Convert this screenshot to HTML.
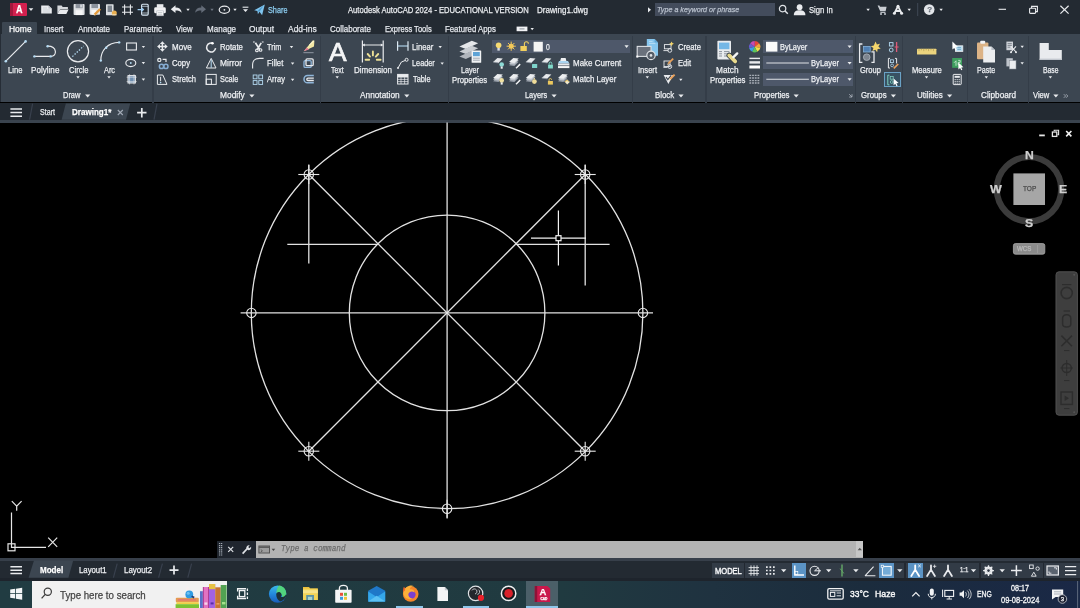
<!DOCTYPE html>
<html lang="en">
<head>
<meta charset="utf-8">
<title>Autodesk AutoCAD 2024 - EDUCATIONAL VERSION Drawing1.dwg</title>
<style>
*{box-sizing:border-box;margin:0;padding:0}
html,body{width:1080px;height:608px;overflow:hidden;background:#000}
body{font-family:"Liberation Sans",sans-serif;color:#e6e9ee;font-size:9.6px;line-height:10px;position:relative}
#app{position:absolute;left:0;top:0;width:1080px;height:608px;overflow:hidden;will-change:transform}
.abs,.t,.b{position:absolute}
.t{white-space:nowrap;line-height:10px;height:10px;color:#eff1f4;transform-origin:0 50%;-webkit-text-stroke:.25px currentColor}
.bar{position:absolute;left:0;width:1080px}
#title{top:0;height:20px;background:#232a32}
#tabs{top:20px;height:16px;background:#232a32}
#ribbon{top:34.3px;height:68.2px;background:#3c4651}
#ftabs{top:102.5px;height:17.5px;background:#232a32}
#fstripe{top:119.8px;height:2.8px;background:#3a434e}
#canvas{top:122.6px;height:435.2px;background:#000}
#lstripe{top:557.8px;height:2.8px;background:#373f4a}
#ltabs{top:560.6px;height:17.2px;background:#232a32}
#lband{top:577.8px;height:2.8px;background:#1e242c}
#taskbar{top:580.6px;height:27.4px;background:linear-gradient(90deg,#213c42 0%,#203a40 52%,#1f3240 66%,#1b2c3d 80%,#1a2846 100%)}
svg{position:absolute;overflow:visible}
</style>
</head>
<body>
<div id="app">
<div class="bar" id="title"></div>
<div class="bar" id="tabs"></div>
<div class="bar" id="ribbon"></div>
<div class="bar" id="ftabs"></div>
<div class="bar" id="fstripe"></div>
<div class="bar" id="canvas"></div>
<div class="bar" id="lstripe"></div>
<div class="bar" id="ltabs"></div>
<div class="bar" id="lband"></div>
<div class="bar" id="taskbar"></div>

<!-- DRAWING -->
<svg id="dwg" style="left:0;top:122px" width="1080" height="437" viewBox="0 122 1080 437">
<clipPath id="cv"><rect x="0" y="122.6" width="1080" height="435.2"/></clipPath>
<g fill="none" stroke="#e2e2e2" stroke-width="1.3" clip-path="url(#cv)">
<circle cx="447.1" cy="312.9" r="195.8"/>
<circle cx="447.1" cy="312.9" r="97.8"/>
<line x1="240.6" y1="312.9" x2="653" y2="312.9"/>
<line x1="447.1" y1="118" x2="447.1" y2="518.6"/>
<line x1="308.8" y1="174.5" x2="585.2" y2="451.2"/>
<line x1="585.2" y1="174.5" x2="308.8" y2="451.2"/>
<line x1="308.8" y1="164.5" x2="308.8" y2="263.5"/>
<line x1="287.3" y1="244.4" x2="378" y2="244.4"/>
<line x1="585.2" y1="164.5" x2="585.2" y2="285.5"/>
<line x1="516.2" y1="244.4" x2="609.6" y2="244.4"/>
</g>
<g fill="none" stroke="#e8e8e8" stroke-width="1.1">
<circle cx="308.8" cy="174.5" r="4.7"/><line x1="298.3" y1="174.5" x2="319.3" y2="174.5"/><line x1="308.8" y1="165" x2="308.8" y2="184"/><circle cx="585.2" cy="174.5" r="4.7"/><line x1="574.7" y1="174.5" x2="595.7" y2="174.5"/><line x1="585.2" y1="165" x2="585.2" y2="184"/><circle cx="308.8" cy="451.2" r="4.7"/><line x1="298.3" y1="451.2" x2="319.3" y2="451.2"/><line x1="308.8" y1="441.7" x2="308.8" y2="460.7"/><circle cx="585.2" cy="451.2" r="4.7"/><line x1="574.7" y1="451.2" x2="595.7" y2="451.2"/><line x1="585.2" y1="441.7" x2="585.2" y2="460.7"/><circle cx="251.4" cy="312.9" r="4.7"/><circle cx="642.9" cy="312.9" r="4.7"/><circle cx="447.1" cy="508.7" r="4.7"/><line x1="447.1" y1="499.7" x2="447.1" y2="517.7"/>
</g>
<g fill="none" stroke="#f2f2f2" stroke-width="1.2">
<line x1="531" y1="238.2" x2="586" y2="238.2"/><line x1="558.4" y1="210.5" x2="558.4" y2="265.5"/>
<rect x="556" y="235.7" width="5" height="5" fill="#000"/>
</g>
<g fill="none" stroke="#e6e6e6" stroke-width="1.2">
<path d="M11.5 512.5V547.3H46"/><rect x="8" y="543.8" width="7" height="7"/>
<path d="M11.8 501.2L16.7 506.2L21.6 501.2M16.7 506.2V510.8"/>
<path d="M48.2 537.6L57.2 546.8M57.2 537.6L48.2 546.8"/>
</g>
</svg>
<div class="b" style="left:10px;top:2.5px;width:16.5px;height:13.5px;background:#d3204e;border-radius:1px"></div>
<div class="b" style="left:10px;top:2.5px;width:2.6px;height:13.5px;background:#a3183d;border-radius:1px 0 0 1px"></div>
<span class="t" style="left:15.8px;top:3.9px;font-size:10.5px;transform:scaleX(0.869);color:#fff;font-weight:bold;">A</span>
<svg style="left:0px;top:0px" width="330" height="20" viewBox="0 0 330 20" ><path d="M28.7 8.2h4.6l-2.3 2.8z" fill="#e9ebee"/><path d="M41.2 5.4h7.3l3.3 3.2v5H41.2z" fill="#e9ebee"/><path d="M48.5 5.4v3.2h3.3" fill="#b9bec6"/><path d="M43 8h4M43 10h7M43 12h7" stroke="#c3c7cd" stroke-width=".7"/><path d="M57.4 5.6h4.2l1.1 1.5h5.2v2h-7.6l-2.9 4.6z" fill="#d5d8dc"/><path d="M59.9 9.4h8.7l-2.3 4.6h-8.9z" fill="#e9ebee"/><rect x="73.6" y="3.9" width="11" height="11.2" rx=".8" fill="#dfe1e4"/><rect x="75.6" y="3.9" width="7" height="4.3" fill="#8b929c"/><rect x="75.6" y="10.2" width="7" height="4.9" fill="#f6f6f6"/><rect x="80.3" y="4.5" width="1.5" height="3" fill="#dfe1e4"/><rect x="89.6" y="3.9" width="10.4" height="10.8" rx=".8" fill="#dfe1e4"/><rect x="91.4" y="3.9" width="6.6" height="4.2" fill="#8b929c"/><rect x="91.4" y="10" width="5" height="4.7" fill="#f6f6f6"/><path d="M94.6 14.6l5.6-5.6" stroke="#e49b3c" stroke-width="2.3"/><path d="M93.8 15.6l1.6-.4-1.1-1.1z" fill="#f3d9a8"/><rect x="106" y="4.2" width="7.6" height="11" rx=".6" fill="#dcdfe2"/><rect x="107.6" y="5.6" width="4.4" height="6.4" fill="#7d858f"/><circle cx="114.3" cy="12.9" r="2.5" fill="#e9b052"/><path d="M112.3 14.8h4.3" stroke="#f2e3c0" stroke-width="1.1"/><path d="M124.6 4.4v10.4M130.4 4.4v10.4M122 7h11M122 12.3h11" stroke="#e9ebee" stroke-width="1.1" fill="none"/><rect x="141.6" y="4.3" width="6.6" height="10.8" rx="1" fill="none" stroke="#d9e8f4" stroke-width="1.1"/><path d="M141.6 6.3h6.6M141.6 13h6.6" stroke="#d9e8f4" stroke-width=".7"/><path d="M137.6 9.6h5.6M141.3 7.6l2.2 2-2.2 2" stroke="#9ecbee" stroke-width="1.1" fill="none"/><rect x="156.8" y="4.2" width="6.6" height="3.6" fill="#e9ebee"/><rect x="154.2" y="7.3" width="11.6" height="6" rx="1.4" fill="#f1f2f4"/><rect x="156.8" y="10.9" width="6.6" height="4.9" fill="#fff" stroke="#aab0b8" stroke-width=".6"/><path d="M157.8 12.6h4.6M157.8 14.2h4.6" stroke="#9aa1aa" stroke-width=".6"/><path d="M170.8 9.2l4.7-3.9v2.3c3.7 0 5.9 1.9 6.2 5.2c-1.5-1.8-3.3-2.4-6.2-2.4v2.7z" fill="#e9ebee"/><path d="M186.3 8.7h3.4l-1.7 2.2z" fill="#e9ebee"/><path d="M206 9.2l-4.7-3.9v2.3c-3.7 0-5.9 1.9-6.2 5.2c1.5-1.8 3.3-2.4 6.2-2.4v2.7z" fill="#636b77"/><path d="M210.3 8.7h3.4l-1.7 2.2z" fill="#6e7682"/><ellipse cx="224.4" cy="9.8" rx="5.2" ry="3.6" fill="none" stroke="#e9ebee" stroke-width="1.2"/><circle cx="224.4" cy="9.8" r=".9" fill="#e9ebee"/><path d="M233.3 8.7h3.4l-1.7 2.2z" fill="#e9ebee"/><path d="M242.6 7.2h5.8" stroke="#e9ebee" stroke-width="1.1"/><path d="M243 9.2h5l-2.5 2.8z" fill="#e9ebee"/><path d="M254.2 10.2l10.6-5.6-2.7 10.6-2.6-3.4-1.6 2.4-.5-3.2z" fill="#7fc4ee"/><path d="M257.4 11l6.2-5.4-4.1 6.2" fill="#4d98c8"/></svg>
<span class="t" style="left:268px;top:4.7px;transform:scaleX(0.761);color:#8fd0f4;">Share</span>
<span class="t" style="left:348px;top:4.7px;transform:scaleX(0.794);color:#eef0f3;">Autodesk AutoCAD 2024 - EDUCATIONAL VERSION</span>
<span class="t" style="left:537.3px;top:4.7px;transform:scaleX(0.839);color:#eef0f3;">Drawing1.dwg</span>
<div class="b" style="left:654.7px;top:3px;width:120.3px;height:13px;background:#434c5c;"></div>
<span class="t" style="left:656.5px;top:4.6px;font-size:8px;transform:scaleX(0.895);color:#b9c1cd;font-style:italic;">Type a keyword or phrase</span>
<span class="t" style="left:808.7px;top:4.7px;transform:scaleX(0.797);color:#eef0f3;">Sign In</span>
<svg style="left:640px;top:0px" width="440" height="20" viewBox="640 0 440 20" ><path d="M648 7.2l3 2.6-3 2.6z" fill="#e9ebee"/><circle cx="782.6" cy="8.6" r="3.2" fill="none" stroke="#dfe2e6" stroke-width="1.2"/><path d="M785 11l2.8 2.8" stroke="#dfe2e6" stroke-width="1.5"/><circle cx="799.6" cy="7.2" r="2.9" fill="#e9ebee"/><path d="M793.8 15.2c0-3.7 2.4-4.9 5.8-4.9s5.8 1.2 5.8 4.9z" fill="#e9ebee"/><path d="M866.4 8.7h3.4l-1.7 2.2z" fill="#e9ebee"/><path d="M877.6 5.4h1.8l.6 1.4h6.6l-1 4.4h-5.4z" fill="#c9cdd3"/><path d="M880.4 12.4h5" stroke="#c9cdd3" stroke-width="1"/><circle cx="881" cy="14" r="1" fill="#c9cdd3"/><circle cx="885" cy="14" r="1" fill="#c9cdd3"/><path d="M894.6 13l3.4-6.8 3.4 6.8M895.8 11h4.4" stroke="#e9ebee" stroke-width="1.8" fill="none" stroke-linejoin="round"/><circle cx="898" cy="6.2" r="1.5" fill="#e9ebee"/><circle cx="894.4" cy="13.2" r="1.5" fill="#e9ebee"/><circle cx="901.6" cy="13.2" r="1.5" fill="#e9ebee"/><path d="M907.5 8.7h3.4l-1.7 2.2z" fill="#e9ebee"/><path d="M917.7 3v13" stroke="#3f4856" stroke-width="1"/><circle cx="929.2" cy="9.6" r="5.3" fill="#e2e5e9"/><path d="M939.4 8.7h3.4l-1.7 2.2z" fill="#e9ebee"/><path d="M998.6 9.3h7.4" stroke="#e9ebee" stroke-width="1.1"/><path d="M1031.6 8.2v-1.8h5.8v5.2h-1.8" stroke="#e9ebee" stroke-width="1.1" fill="none"/><rect x="1029.6" y="8.2" width="6" height="5.2" rx=".8" stroke="#e9ebee" stroke-width="1.1" fill="none"/><path d="M1060.4 5.8l8.2 7.8M1068.6 5.8l-8.2 7.8" stroke="#e9ebee" stroke-width="1.2"/></svg>
<span class="t" style="left:927.2px;top:4.6px;font-size:8px;color:#6a717b;font-weight:bold;">?</span>
<div class="b" style="left:2.2px;top:21.6px;width:35.2px;height:13.4px;background:#3c4651;border-radius:1px 1px 0 0"></div>
<span class="t" style="left:8.6px;top:23.6px;transform:scaleX(0.883);color:#fff;">Home</span>
<span class="t" style="left:44.4px;top:23.6px;transform:scaleX(0.812);color:#e6e9ee;">Insert</span>
<span class="t" style="left:78px;top:23.6px;transform:scaleX(0.833);color:#e6e9ee;">Annotate</span>
<span class="t" style="left:124px;top:23.6px;transform:scaleX(0.819);color:#e6e9ee;">Parametric</span>
<span class="t" style="left:176.3px;top:23.6px;transform:scaleX(0.81);color:#e6e9ee;">View</span>
<span class="t" style="left:206.7px;top:23.6px;transform:scaleX(0.839);color:#e6e9ee;">Manage</span>
<span class="t" style="left:249.2px;top:23.6px;transform:scaleX(0.868);color:#e6e9ee;">Output</span>
<span class="t" style="left:288px;top:23.6px;transform:scaleX(0.882);color:#e6e9ee;">Add-ins</span>
<span class="t" style="left:330.4px;top:23.6px;transform:scaleX(0.833);color:#e6e9ee;">Collaborate</span>
<span class="t" style="left:384.8px;top:23.6px;transform:scaleX(0.784);color:#e6e9ee;">Express Tools</span>
<span class="t" style="left:445px;top:23.6px;transform:scaleX(0.814);color:#e6e9ee;">Featured Apps</span>
<svg style="left:510px;top:22px" width="30" height="14" viewBox="510 22 30 14" ><rect x="516.6" y="26.6" width="10.8" height="4.6" fill="#f2f3f5"/><path d="M519.5 28.9h5" stroke="#6e7682" stroke-width=".8"/><path d="M530.5 28.1h3.4l-1.7 2.2z" fill="#e9ebee"/></svg>
<div class="b" style="left:152.3px;top:35.5px;width:1.4px;height:67px;background:#343d48;"></div>
<div class="b" style="left:319.7px;top:35.5px;width:1.4px;height:67px;background:#343d48;"></div>
<div class="b" style="left:447.5px;top:35.5px;width:1.4px;height:67px;background:#343d48;"></div>
<div class="b" style="left:631.6999999999999px;top:35.5px;width:1.4px;height:67px;background:#343d48;"></div>
<div class="b" style="left:705.3px;top:35.5px;width:1.4px;height:67px;background:#343d48;"></div>
<div class="b" style="left:855.0999999999999px;top:35.5px;width:1.4px;height:67px;background:#343d48;"></div>
<div class="b" style="left:901.9px;top:35.5px;width:1.4px;height:67px;background:#343d48;"></div>
<div class="b" style="left:966.8px;top:35.5px;width:1.4px;height:67px;background:#343d48;"></div>
<div class="b" style="left:1027.8999999999999px;top:35.5px;width:1.4px;height:67px;background:#343d48;"></div>
<div class="b" style="left:0px;top:34.3px;width:1.4px;height:68.2px;background:#262d36;"></div>
<svg style="left:0px;top:36px" width="500" height="67" viewBox="0 36 500 67" ><path d="M5.8 61.2L25.6 41.4" stroke="#e9ebee" stroke-width="1.2"/><circle cx="5.8" cy="61.2" r="1.3" fill="#b4daf2"/><circle cx="25.6" cy="41.4" r="1.3" fill="#b4daf2"/><path d="M34.4 56.4h16.4c6.6 0 6.6-10.2-3-10.2" stroke="#e9ebee" stroke-width="1.2" fill="none"/><circle cx="34.4" cy="56.4" r="1.2" fill="#b4daf2"/><circle cx="50.6" cy="56.4" r="1.2" fill="#b4daf2"/><circle cx="47.6" cy="46.2" r="1.2" fill="#b4daf2"/><circle cx="78" cy="51.3" r="10.6" stroke="#e9ebee" stroke-width="1.2" fill="none"/><path d="M72.4 56.6L83.6 46" stroke="#b4daf2" stroke-width="1.3" stroke-dasharray="1.4 1.6"/><path d="M100.8 60.6c0-10.6 7-18 18.4-18.2" stroke="#e9ebee" stroke-width="1.2" fill="none"/><circle cx="100.8" cy="60.6" r="1.2" fill="#b4daf2"/><circle cx="119.2" cy="42.4" r="1.2" fill="#b4daf2"/><circle cx="106.2" cy="47.8" r="1.2" fill="#b4daf2"/><path d="M76.3 76.2h3.4l-1.7 2.2z" fill="#e9ebee"/><path d="M107.3 76.2h3.4l-1.7 2.2z" fill="#e9ebee"/><rect x="126.6" y="43" width="9.8" height="7" stroke="#e9ebee" stroke-width="1.1" fill="none"/><ellipse cx="130.8" cy="63" rx="5" ry="3.6" stroke="#e9ebee" stroke-width="1.1" fill="none"/><circle cx="130.8" cy="63" r=".9" fill="#b4daf2"/><rect x="128" y="75.6" width="7.4" height="7.4" fill="#6f8fb0" stroke="#e9ebee" stroke-width="1"/><path d="M126.6 77.2h10.2M126.6 81.6h10.2M129.6 74.2v10.2M134 74.2v10.2" stroke="#e9ebee" stroke-width=".6"/><path d="M141.7 45.9h3.4l-1.7 2.2z" fill="#e9ebee"/><path d="M141.7 62.1h3.4l-1.7 2.2z" fill="#e9ebee"/><path d="M141.7 78.5h3.4l-1.7 2.2z" fill="#e9ebee"/><path d="M85.1 94.4h5.2l-2.6 3z" fill="#e9ebee"/><path d="M162.4 43.4v6.2M159.3 46.5h6.2" stroke="#e9ebee" stroke-width="1.5"/><path d="M162.4 41.2l2.5 2.9h-5zM162.4 51.8l2.5-2.9h-5zM157.1 46.5l2.9-2.5v5zM167.7 46.5l-2.9-2.5v5z" fill="#e9ebee"/><circle cx="159.3" cy="59.9" r="1.6" stroke="#e9ebee" stroke-width="1.2" fill="none"/><path d="M162.6 59.3h3.4v2.6" stroke="#e9ebee" stroke-width="1.2" fill="none"/><circle cx="161.5" cy="66.4" r="2.1" stroke="#86acd2" stroke-width="1.5" fill="none"/><circle cx="165.9" cy="66.4" r="2.1" stroke="#86acd2" stroke-width="1.5" fill="none"/><path d="M157.4 75h5.4l4.2 9.4h-9.6z" stroke="#e9ebee" stroke-width="1" fill="none"/><path d="M160.6 76.8v4.4" stroke="#e9ebee" stroke-width="1"/><circle cx="160.6" cy="82.6" r=".8" fill="#b4daf2"/><path d="M213.4 43.6a4.5 4.5 0 1 0 2.2 4.6" stroke="#e9ebee" stroke-width="1.5" fill="none"/><circle cx="212.4" cy="43.2" r="1.3" fill="#fff"/><path d="M206.4 68h9.6l-4.8-9.6z" stroke="#e9ebee" stroke-width="1" fill="none"/><path d="M211.2 59.6v8.2" stroke="#b4daf2" stroke-width="1"/><rect x="206.2" y="74.4" width="10" height="10" stroke="#e9ebee" stroke-width="1" fill="none"/><rect x="206.2" y="79.2" width="5.2" height="5.2" stroke="#e9ebee" stroke-width="1" fill="none"/><path d="M255.4 42.8l4.2 6.6M261.2 42.8l-3.8 6.6" stroke="#e9ebee" stroke-width="1.7"/><circle cx="256.9" cy="50.4" r="1.3" stroke="#e9ebee" stroke-width="1.1" fill="none"/><circle cx="260.6" cy="50" r="1.3" stroke="#e9ebee" stroke-width="1.1" fill="none"/><path d="M253 42h1.8M261.8 42h1.8" stroke="#e9ebee" stroke-width="1"/><path d="M252.6 68.4v-3.6c0-4.4 2.8-6.4 7-6.4h4" stroke="#e9ebee" stroke-width="1.1" fill="none"/><rect x="253.2" y="75" width="3.8" height="3.8" stroke="#b4daf2" stroke-width=".9" fill="none"/><rect x="258.8" y="75" width="3.8" height="3.8" stroke="#b4daf2" stroke-width=".9" fill="none"/><rect x="253.2" y="80.6" width="3.8" height="3.8" stroke="#b4daf2" stroke-width=".9" fill="none"/><rect x="258.8" y="80.6" width="3.8" height="3.8" stroke="#b4daf2" stroke-width=".9" fill="none"/><path d="M289.8 46h3.4l-1.7 2.2z" fill="#e9ebee"/><path d="M290.9 62.5h3.4l-1.7 2.2z" fill="#e9ebee"/><path d="M290.9 78.7h3.4l-1.7 2.2z" fill="#e9ebee"/><path d="M303.8 51.2l8.8-10.6 1.8-.200-.400 6.2z" fill="#f3e8a4"/><path d="M303.8 51.2l3-3.6 2.2 1.8z" fill="#e27c94"/><path d="M309 45.4l5-4.6" stroke="#fffbe0" stroke-width="1"/><path d="M303.4 52.7h10.2" stroke="#9aa2ad" stroke-width=".9"/><rect x="304" y="60.6" width="7.2" height="6.8" rx="1.2" stroke="#8fb6da" stroke-width="1.3" fill="none"/><rect x="306" y="58.8" width="7.2" height="6.8" rx="1.2" stroke="#e9ebee" stroke-width="1.3" fill="none"/><path d="M313.8 75.6h-6.2a3.6 3.6 0 0 0 0 7.2h6.2" stroke="#8fb6da" stroke-width="1.5" fill="none"/><path d="M313.8 78.1h-5.8a1.2 1.2 0 0 0 0 2.4h5.8" stroke="#e9ebee" stroke-width="1.3" fill="none"/><path d="M249.3 94.4h5.2l-2.6 3z" fill="#e9ebee"/><path d="M335.5 76.2h3.4l-1.7 2.2z" fill="#e9ebee"/><path d="M362.4 40.6v21.8M383.2 40.6v21.8M363.4 45h18.8" stroke="#e9ebee" stroke-width="1.2"/><path d="M362.4 45l2.4-1.4v2.8zM383.2 45l-2.4-1.4v2.8z" fill="#e9ebee"/><path d="M365.6 59.7h3.6M376.8 59.7h3.8M372.9 51.4v4M367.7 54l2.3 2.6M378.2 54l-2.4 2.6" stroke="#ecdf95" stroke-width="1.9" stroke-linecap="round"/><path d="M397.4 46h10.6" stroke="#b4daf2" stroke-width="1.1"/><path d="M397.6 41.2v9.6M408 41.2v9.6" stroke="#dbe8f2" stroke-width="1.2"/><path d="M398 68l3.4-6 4-1.6" stroke="#e9ebee" stroke-width="1" fill="none"/><circle cx="406.6" cy="59.8" r="1.5" stroke="#e9ebee" stroke-width="1" fill="none"/><circle cx="398" cy="68" r="1" fill="#e9ebee"/><rect x="397.6" y="74.4" width="10.4" height="9.6" stroke="#e9ebee" stroke-width="1" fill="none"/><path d="M397.6 77.2h10.4M397.6 79.4h10.4M397.6 81.6h10.4M401 77.2v6.8M404.6 77.2v6.8" stroke="#e9ebee" stroke-width=".7"/><rect x="397.6" y="74.4" width="10.4" height="2.6" fill="#e9ebee"/><path d="M438.5 46h3.4l-1.7 2.2z" fill="#e9ebee"/><path d="M440.5 62.5h3.4l-1.7 2.2z" fill="#e9ebee"/><path d="M404.2 94.4h5.2l-2.6 3z" fill="#e9ebee"/><path d="M459.4 46.4l12.4-5.6 6.4 2.4-12.4 5.8z" fill="#e4e6e9"/><path d="M459.4 51.4l12.4-5.6 6.4 2.4-12.4 5.8z" fill="#c9cdd2"/><path d="M459.4 56.4l12.4-5.6 6.4 2.4-12.4 5.8z" fill="#b1b6bd"/><rect x="471.6" y="50.4" width="9.6" height="12.4" rx=".6" fill="#f1f3f5"/><rect x="473" y="52" width="6.8" height="4.2" fill="#5ea3d6"/><path d="M473 58.2h6.8M473 60.2h6.8" stroke="#8d949e" stroke-width=".8"/></svg>
<div class="b" style="left:491.7px;top:40.2px;width:138.5px;height:13px;background:#4e586a;"></div>
<svg style="left:488px;top:36px" width="280" height="67" viewBox="488 36 280 67" ><circle cx="498.6" cy="45.2" r="2.8" fill="#f6da72"/><rect x="497.4" y="48" width="2.4" height="2.6" fill="#d9dde2"/><circle cx="511.2" cy="46.2" r="2.5" fill="#f4c95a"/><path d="M511.2 41.6v9.2M506.6 46.2h9.2M508 43l6.4 6.4M514.4 43l-6.4 6.4" stroke="#f4c95a" stroke-width="1"/><rect x="520.4" y="46" width="6.4" height="5" fill="#f1cf5e"/><path d="M524.4 46v-2.2a2 2 0 0 1 4 0" stroke="#f1cf5e" stroke-width="1.1" fill="none"/><rect x="533.6" y="41.8" width="9.2" height="9.8" fill="#f4f4f4"/><path d="M624.5 45.3h4.2l-2.1 2.6z" fill="#e9ebee"/><path d="M497.4 58.1L502.8 58.5L498.5 62.9L493.1 62.1z" fill="#e6e8eb"/><path d="M493.1 62.1L498.5 62.9" stroke="#8d949e" stroke-width=".8"/><circle cx="501.70000000000005" cy="64.5" r="2.3" fill="#8edbd6"/><rect x="500.70000000000005" y="66.5" width="2" height="2.2" fill="#eef0f2"/><path d="M513.3 61.3L518.7 61.7L514.4 66.1L509 65.3z" fill="#9aa1ab"/><path d="M513.3 59.7L518.7 60.1L514.4 64.5L509 63.7z" fill="#c2c7ce"/><path d="M513.3 58.1L518.7 58.5L514.4 62.9L509 62.1z" fill="#eceef0"/><path d="M516 68.3l4.2-4.2" stroke="#2f3843" stroke-width="2.6"/><path d="M516 68.3l4.2-4.2" stroke="#f1f2f4" stroke-width="1.6"/><path d="M530.1 58.1L535.5 58.5L531.2 62.9L525.8 62.1z" fill="#e6e8eb"/><path d="M525.8 62.1L531.2 62.9" stroke="#8d949e" stroke-width=".8"/><rect x="532" y="63.900000000000006" width="5.2" height="4.2" rx=".6" fill="#7fd4cc"/><path d="M546 58.1L551.4 58.5L547.1 62.9L541.7 62.1z" fill="#e6e8eb"/><path d="M541.7 62.1L547.1 62.9" stroke="#8d949e" stroke-width=".8"/><rect x="548.1" y="64.7" width="4.8" height="3.8" fill="#7fd8c8"/><path d="M549.2 64.7v-1.3a1.3 1.3 0 0 1 2.6 0v1.3" stroke="#7fd8c8" stroke-width=".9" fill="none"/><path d="M561 57.9h4.6l.8 3h-6.2z" fill="#eef0f2"/><path d="M559 60.9h9l1.4 2.6h-11.4z" fill="#a9d4f0"/><rect x="558" y="63.5" width="11.4" height="2" fill="#e6e8eb"/><rect x="558" y="65.9" width="11.4" height="2.2" fill="#f4f5f6"/><path d="M558 65.7h11.4" stroke="#7d858f" stroke-width=".5"/><path d="M497.4 77.2L502.8 77.6L498.5 82L493.1 81.2z" fill="#9aa1ab"/><path d="M497.4 75.6L502.8 76L498.5 80.4L493.1 79.6z" fill="#c2c7ce"/><path d="M497.4 74L502.8 74.4L498.5 78.8L493.1 78z" fill="#eceef0"/><circle cx="501.70000000000005" cy="80.4" r="2.3" fill="#efe0a0"/><rect x="500.70000000000005" y="82.4" width="2" height="2.2" fill="#eef0f2"/><path d="M513.3 77.2L518.7 77.6L514.4 82L509 81.2z" fill="#9aa1ab"/><path d="M513.3 75.6L518.7 76L514.4 80.4L509 79.6z" fill="#c2c7ce"/><path d="M513.3 74L518.7 74.4L514.4 78.8L509 78z" fill="#eceef0"/><path d="M516 84.2l4.2-4.2" stroke="#2f3843" stroke-width="2.6"/><path d="M516 84.2l4.2-4.2" stroke="#f1f2f4" stroke-width="1.6"/><path d="M530.1 77.2L535.5 77.6L531.2 82L525.8 81.2z" fill="#9aa1ab"/><path d="M530.1 75.6L535.5 76L531.2 80.4L525.8 79.6z" fill="#c2c7ce"/><path d="M530.1 74L535.5 74.4L531.2 78.8L525.8 78z" fill="#eceef0"/><circle cx="534.4" cy="81.60000000000001" r="2.4" fill="#efdc9a"/><path d="M534.4 78.00000000000001v1.4" stroke="#efdc9a" stroke-width="1"/><path d="M546 74L551.4 74.4L547.1 78.8L541.7 78z" fill="#e6e8eb"/><path d="M541.7 78L547.1 78.8" stroke="#8d949e" stroke-width=".8"/><rect x="547.9000000000001" y="81.00000000000001" width="5" height="3.6" fill="#ecc85e"/><path d="M549.0000000000001 81.00000000000001v-1.2a1.3 1.3 0 0 1 2.6 0" stroke="#ecc85e" stroke-width=".9" fill="none"/><path d="M562.3 77.2L567.7 77.6L563.4 82L558 81.2z" fill="#9aa1ab"/><path d="M562.3 75.6L567.7 76L563.4 80.4L558 79.6z" fill="#c2c7ce"/><path d="M562.3 74L567.7 74.4L563.4 78.8L558 78z" fill="#eceef0"/><path d="M564.4 81.60000000000001l2.6-2.4 2.8 2.8-2.6 2.4z" fill="#f1ead0"/><path d="M565.2 81.80000000000001l1.8-1.6 1.6 1.6" stroke="#e2b84c" stroke-width="1" fill="none"/><path d="M551.5 94.4h5.2l-2.6 3z" fill="#e9ebee"/><path d="M646.8 39h7.8l3.4 3.4v13.4h-11.2z" fill="#86c6ee"/><path d="M654.6 39v3.4h3.4z" fill="#5fa4d2"/><path d="M649 41.4h3.6M649 43.4h6.4" stroke="#c4e3f6" stroke-width=".8"/><rect x="637.2" y="46.4" width="13.8" height="10" fill="#6a717c" stroke="#dde0e4" stroke-width="1.1"/><circle cx="651" cy="55.4" r="4.2" fill="#555d68" stroke="#dfe2e6" stroke-width="1.2"/><circle cx="651" cy="55.4" r="1.3" fill="#dfe2e6"/><rect x="636.3" y="55.6" width="2" height="2" fill="#fff"/><path d="M645.6 76.2h3.4l-1.7 2.2z" fill="#e9ebee"/><rect x="664.4" y="44.6" width="6.6" height="4.2" stroke="#e9ebee" stroke-width=".9" fill="none"/><circle cx="669.8" cy="50.4" r="1.9" stroke="#e9ebee" stroke-width=".9" fill="none"/><path d="M663.4 50.6h5" stroke="#e9ebee" stroke-width=".9"/><path d="M671.6 41.4l.8 1.6 1.6.8-1.6.8-.8 1.6-.8-1.6-1.6-.8 1.6-.8z" fill="#f3d56a"/><rect x="664" y="61" width="6" height="5.6" stroke="#e9ebee" stroke-width=".9" fill="none"/><circle cx="669.8" cy="66.6" r="1.9" stroke="#e9ebee" stroke-width=".9" fill="none"/><path d="M663.4 67.4h4" stroke="#e9ebee" stroke-width=".9"/><path d="M668.2 63.6l5-5" stroke="#e8a05a" stroke-width="1.8"/><path d="M667.2 65l.6-1.8 1.2 1.2z" fill="#f3dcb0"/><path d="M663.6 75h9.6l-4.8 9z" fill="#e9ebee"/><path d="M666 77.2l1.8 2.4 3.4-4.2" stroke="#3c4651" stroke-width="1.2" fill="none"/><path d="M670.2 79l4.4-4.4" stroke="#e8a05a" stroke-width="1.9"/><path d="M669.2 80.6l.6-2 1.4 1.4z" fill="#f3dcb0"/><path d="M679.1 78.7h3.4l-1.7 2.2z" fill="#e9ebee"/><path d="M678.4 94.4h5.2l-2.6 3z" fill="#e9ebee"/><rect x="717.4" y="40.8" width="13.6" height="18.8" rx=".8" fill="#e9ecef"/><rect x="719" y="42.6" width="10.4" height="6.6" fill="#74b7e6"/><path d="M719 51.6h3M719 53.8h3M719 56h3M724 51.6h5.4M724 53.8h5.4M724 56h5.4" stroke="#8b929c" stroke-width="1"/><path d="M729.2 55.4l6 6" stroke="#2f3843" stroke-width="5.4" stroke-linecap="round"/><path d="M729.2 55.4l6 6" stroke="#eadb8e" stroke-width="3.8" stroke-linecap="round"/><path d="M733.4 57.2l3.8-3.8" stroke="#f5f6f7" stroke-width="2.4" stroke-linecap="round"/><path d="M754.7 46.7L754.7 41A5.7 5.7 0 0 1 759.16 43.15z" fill="#e8443a"/><path d="M754.7 46.7L759.16 43.15A5.7 5.7 0 0 1 760.26 47.97z" fill="#f2a23a"/><path d="M754.7 46.7L760.26 47.97A5.7 5.7 0 0 1 757.17 51.84z" fill="#f0e04a"/><path d="M754.7 46.7L757.17 51.84A5.7 5.7 0 0 1 752.23 51.84z" fill="#5cc45a"/><path d="M754.7 46.7L752.23 51.84A5.7 5.7 0 0 1 749.14 47.97z" fill="#3aa0e0"/><path d="M754.7 46.7L749.14 47.97A5.7 5.7 0 0 1 750.24 43.15z" fill="#6a5ad0"/><path d="M754.7 46.7L750.24 43.15A5.7 5.7 0 0 1 754.7 41z" fill="#c84ab0"/><path d="M749.4 58.4h10.6" stroke="#e9ebee" stroke-width="1.4"/><path d="M749.4 62.4h10.6" stroke="#e9ebee" stroke-width="2.4"/><path d="M749.4 67h10.6" stroke="#fff" stroke-width="3"/><path d="M749.4 75.4h10.6M749.4 78h10.6M749.4 80.6h10.6M749.4 83h10.6" stroke="#a9b0b9" stroke-width="1.3" stroke-dasharray="1.8 .900"/></svg>
<div class="b" style="left:762.8px;top:40.2px;width:90.4px;height:12.9px;background:#4e586a;"></div>
<div class="b" style="left:762.8px;top:56.4px;width:90.4px;height:12.9px;background:#4e586a;"></div>
<div class="b" style="left:762.8px;top:72.7px;width:90.4px;height:12.9px;background:#4e586a;"></div>
<div class="b" style="left:884.2px;top:72px;width:16.8px;height:14.8px;background:#385263;border:1px solid #6aa2c6"></div>
<svg style="left:760px;top:36px" width="320" height="67" viewBox="760 36 320 67" ><rect x="766" y="41.8" width="11.4" height="9.8" fill="#fafafa"/><path d="M766.3 63h42.6M766.3 79.3h42.6" stroke="#dfe2e6" stroke-width="1.1"/><path d="M847.5 45.5h4.2l-2.1 2.6z" fill="#e9ebee"/><path d="M847.5 61.9h4.2l-2.1 2.6z" fill="#e9ebee"/><path d="M847.5 78.2h4.2l-2.1 2.6z" fill="#e9ebee"/><path d="M793.6 94.4h5.2l-2.6 3z" fill="#e9ebee"/><path d="M849.2 94.2l2.8 2.8M852 94.2v2.8h-2.8" stroke="#aeb5bf" stroke-width=".8" fill="none"/><path d="M862.4 44h-2.8v18.4h2.8M871.4 51.8h2.6v10.6h-2.6" stroke="#e9ebee" stroke-width="1.3" fill="none"/><rect x="863.6" y="46.4" width="6.6" height="5.6" fill="#4f7fb2" stroke="#86b2d8" stroke-width=".8"/><circle cx="866.7" cy="57.2" r="3.3" fill="#7d858f" stroke="#aeb5bd" stroke-width=".8"/><path d="M875.6 41.6l1.3 3 3.1-.800-1.6 2.7 2.3 2.2-3.1.400-.400 3.1-1.9-2.5-2.8 1.3.900-3-2.6-1.7 3-.800z" fill="#f4d66c"/><rect x="889.4" y="42.6" width="3.6" height="3.4" stroke="#b4daf2" stroke-width=".9" fill="none"/><circle cx="891.2" cy="50" r="1.9" stroke="#b4daf2" stroke-width=".9" fill="none"/><path d="M896.6 42v10" stroke="#e05a78" stroke-width="1.3"/><path d="M894.6 47h4" stroke="#e05a78" stroke-width="1"/><path d="M890 58.4h-1.6v9.6h1.6M895 58.4h1.6v5" stroke="#e9ebee" stroke-width="1" fill="none"/><rect x="890.6" y="59.8" width="3" height="2.8" stroke="#b4daf2" stroke-width=".8" fill="none"/><circle cx="892.1" cy="65.4" r="1.4" stroke="#b4daf2" stroke-width=".8" fill="none"/><path d="M893.8 68.4l4.4-4.4" stroke="#e8a05a" stroke-width="1.7"/><path d="M889.4 75.2h-1.6v9.6h1.6" stroke="#7fd0c0" stroke-width="1" fill="none"/><rect x="890.2" y="76.4" width="3" height="2.8" stroke="#7fd0c0" stroke-width=".8" fill="none"/><circle cx="891.7" cy="82" r="1.4" stroke="#7fd0c0" stroke-width=".8" fill="none"/><path d="M893.6 78.4v6.8l1.7-1.5 1.2 2.5 1.1-.5-1.2-2.5 2.2-.2z" fill="#fff"/><path d="M890.8 94.4h5.2l-2.6 3z" fill="#e9ebee"/><rect x="917" y="48.7" width="19.4" height="5.8" rx=".6" fill="#ecd47e"/><path d="M919 48.7v2.4M921.4 48.7v1.6M923.8 48.7v2.4M926.2 48.7v1.6M928.6 48.7v2.4M931 48.7v1.6M933.4 48.7v2.4" stroke="#a8924a" stroke-width=".6"/><path d="M924.8 76.2h3.4l-1.7 2.2z" fill="#e9ebee"/><rect x="955.4" y="45.8" width="7.4" height="5.6" fill="#b9dff2" stroke="#e9ebee" stroke-width=".8"/><path d="M952.4 41.6v8l1.9-1.7 1.4 2.8 1.2-.6-1.4-2.8 2.5-.2z" fill="#fff"/><path d="M957.4 47.6h3.6M957.4 49.4h3.6" stroke="#5a8fb5" stroke-width=".7"/><rect x="952.2" y="58" width="9.8" height="9.8" fill="#3f9f5f"/><path d="M954 62.8l2-2v5M958.2 60.4h2v2h-2v2.4h2.2" stroke="#d6f0dc" stroke-width=".8" fill="none"/><path d="M958.4 62.4v7l1.7-1.5 1.2 2.4 1.1-.5-1.2-2.4 2.2-.2z" fill="#fff"/><rect x="953.2" y="74.4" width="8" height="10.2" rx=".6" stroke="#e9ebee" stroke-width="1" fill="none"/><rect x="954.6" y="75.8" width="5.2" height="2" fill="#e9ebee"/><path d="M954.6 79.6h5.2M954.6 81.4h5.2M954.6 83.2h5.2" stroke="#e9ebee" stroke-width=".9" stroke-dasharray="1.2 .800"/><path d="M947 94.4h5.2l-2.6 3z" fill="#e9ebee"/><rect x="977" y="42.4" width="11.4" height="16.8" rx="1" fill="#dcb386"/><rect x="980.2" y="40.8" width="5" height="3" rx="1" fill="#f1f2f4"/><path d="M983.2 46.4h8.2l3.6 3.6v12.4h-11.8z" fill="#eceef0"/><path d="M991.4 46.4v3.6h3.6z" fill="#b9bec6"/><path d="M984.6 76.2h3.4l-1.7 2.2z" fill="#e9ebee"/><rect x="1006.4" y="41.6" width="6.6" height="8.6" fill="#cfd3d9"/><path d="M1007.6 43.6h4.2M1007.6 45.4h4.2M1007.6 47.2h2.6" stroke="#5d6570" stroke-width=".7"/><path d="M1011 46.4l5 5.6M1016 46.4l-5 5.6" stroke="#e9ebee" stroke-width="1.1"/><circle cx="1011" cy="52.2" r="1" fill="#e9ebee"/><circle cx="1016" cy="52.2" r="1" fill="#e9ebee"/><rect x="1006.4" y="58.2" width="6.4" height="8.2" fill="#bfc4cb"/><rect x="1009.4" y="60.6" width="6.6" height="8.4" fill="#eceef0" stroke="#8b929c" stroke-width=".5"/><path d="M1020.5 45.8h3.4l-1.7 2.2z" fill="#e9ebee"/><path d="M1020.5 62.3h3.4l-1.7 2.2z" fill="#e9ebee"/><path d="M1039.6 43h9.2v7h13v10h-22.2z" fill="#e9ebee"/><path d="M1039.6 58.6h22.2v1.4h-22.2z" fill="#c3c8cf"/><path d="M1048.7 76.2h3.4l-1.7 2.2z" fill="#e9ebee"/><path d="M1053.3 94.4h5.2l-2.6 3z" fill="#e9ebee"/><path d="M1063.8 94.2l1.8 1.8-1.8 1.8M1066 94.2l1.8 1.8-1.8 1.8" stroke="#aeb5bf" stroke-width=".8" fill="none"/></svg>
<span class="t" style="left:8.4px;top:64.8px;transform:scaleX(0.794);">Line</span>
<span class="t" style="left:30.6px;top:64.8px;transform:scaleX(0.845);">Polyline</span>
<span class="t" style="left:68.6px;top:64.8px;transform:scaleX(0.795);">Circle</span>
<span class="t" style="left:104px;top:64.8px;transform:scaleX(0.764);">Arc</span>
<span class="t" style="left:63.1px;top:90.4px;transform:scaleX(0.777);">Draw</span>
<span class="t" style="left:172px;top:41.5px;transform:scaleX(0.835);">Move</span>
<span class="t" style="left:172px;top:58px;transform:scaleX(0.803);">Copy</span>
<span class="t" style="left:172px;top:74.2px;transform:scaleX(0.789);">Stretch</span>
<span class="t" style="left:220px;top:41.5px;transform:scaleX(0.81);">Rotate</span>
<span class="t" style="left:220px;top:58px;transform:scaleX(0.878);">Mirror</span>
<span class="t" style="left:220px;top:74.2px;transform:scaleX(0.763);">Scale</span>
<span class="t" style="left:267.3px;top:41.5px;transform:scaleX(0.765);">Trim</span>
<span class="t" style="left:267px;top:58px;transform:scaleX(0.804);">Fillet</span>
<span class="t" style="left:267px;top:74.2px;transform:scaleX(0.785);">Array</span>
<span class="t" style="left:219.8px;top:90.4px;transform:scaleX(0.874);">Modify</span>
<span class="t" style="left:328.8px;top:46.5px;font-size:26.5px;transform:scaleX(0.995);color:#f4f5f6;-webkit-text-stroke:.7px #f4f5f6;">A</span>
<span class="t" style="left:331px;top:64.8px;transform:scaleX(0.721);">Text</span>
<span class="t" style="left:354.2px;top:64.8px;transform:scaleX(0.838);">Dimension</span>
<span class="t" style="left:412.2px;top:41.5px;transform:scaleX(0.795);">Linear</span>
<span class="t" style="left:412.2px;top:58px;transform:scaleX(0.763);">Leader</span>
<span class="t" style="left:412.5px;top:74.2px;transform:scaleX(0.767);">Table</span>
<span class="t" style="left:360.4px;top:90.4px;transform:scaleX(0.863);">Annotation</span>
<span class="t" style="left:461.4px;top:64.8px;transform:scaleX(0.746);">Layer</span>
<span class="t" style="left:452.4px;top:74.8px;transform:scaleX(0.803);">Properties</span>
<span class="t" style="left:546.2px;top:41.5px;transform:scaleX(0.711);">0</span>
<span class="t" style="left:572.7px;top:58px;transform:scaleX(0.831);">Make Current</span>
<span class="t" style="left:572.7px;top:74.2px;transform:scaleX(0.82);">Match Layer</span>
<span class="t" style="left:525.4px;top:90.4px;transform:scaleX(0.771);">Layers</span>
<span class="t" style="left:638px;top:64.8px;transform:scaleX(0.792);">Insert</span>
<span class="t" style="left:678px;top:41.5px;transform:scaleX(0.795);">Create</span>
<span class="t" style="left:678px;top:58px;transform:scaleX(0.786);">Edit</span>
<span class="t" style="left:654.8px;top:90.4px;transform:scaleX(0.818);">Block</span>
<span class="t" style="left:716.4px;top:64.8px;transform:scaleX(0.861);">Match</span>
<span class="t" style="left:709.5px;top:74.8px;transform:scaleX(0.809);">Properties</span>
<span class="t" style="left:779.7px;top:41.5px;transform:scaleX(0.775);">ByLayer</span>
<span class="t" style="left:810.6px;top:58px;transform:scaleX(0.793);">ByLayer</span>
<span class="t" style="left:810.6px;top:74.2px;transform:scaleX(0.793);">ByLayer</span>
<span class="t" style="left:753.9px;top:90.4px;transform:scaleX(0.812);">Properties</span>
<span class="t" style="left:860px;top:64.8px;transform:scaleX(0.784);">Group</span>
<span class="t" style="left:861.3px;top:90.4px;transform:scaleX(0.814);">Groups</span>
<span class="t" style="left:911.8px;top:64.8px;transform:scaleX(0.796);">Measure</span>
<span class="t" style="left:917px;top:90.4px;transform:scaleX(0.834);">Utilities</span>
<span class="t" style="left:977px;top:64.8px;transform:scaleX(0.746);">Paste</span>
<span class="t" style="left:981px;top:90.4px;transform:scaleX(0.854);">Clipboard</span>
<span class="t" style="left:1042.5px;top:64.8px;transform:scaleX(0.709);">Base</span>
<span class="t" style="left:1032.7px;top:90.4px;transform:scaleX(0.79);">View</span>
<svg style="left:0px;top:103px" width="200" height="17" viewBox="0 103 200 17" ><path d="M10.4 109h11.6M10.4 112.6h11.6M10.4 116.2h11.6" stroke="#e9ebee" stroke-width="1.5"/><path d="M29.6 119.6l3-16" stroke="#39414e" stroke-width="1.2"/><path d="M61.6 119.8l4.2-16.2h64.4l-4.2 16.2z" fill="#3c4651"/><path d="M117.8 110l5 5M122.8 110l-5 5" stroke="#a3abb7" stroke-width="1.1"/><path d="M141.8 108v9.4M137.1 112.7h9.4" stroke="#e9ebee" stroke-width="1.7"/><path d="M154 119.6l3-16" stroke="#39414e" stroke-width="1.2"/></svg>
<span class="t" style="left:39.7px;top:107.4px;transform:scaleX(0.74);color:#eef0f3;">Start</span>
<span class="t" style="left:72px;top:107.4px;transform:scaleX(0.838);color:#fff;font-weight:bold;">Drawing1*</span>
<svg style="left:980px;top:122px" width="100" height="300" viewBox="980 122 100 300" ><path d="M1039.2 135.4h5.6" stroke="#e6e6e6" stroke-width="1.8"/><rect x="1052.4" y="132" width="4.4" height="4.4" fill="none" stroke="#e6e6e6" stroke-width="1.3"/><path d="M1054.2 131v-.800h4.4v4.4h-1" fill="none" stroke="#e6e6e6" stroke-width="1.1"/><path d="M1066.2 131l5.2 5.4M1071.4 131l-5.2 5.4" stroke="#f0f0f0" stroke-width="1.6"/><circle cx="1029" cy="189.2" r="32.2" fill="none" stroke="#3b3b3b" stroke-width="6.2"/><rect x="1013.4" y="173.4" width="31.6" height="31.6" fill="#a6a6a6"/><rect x="1013.4" y="243.6" width="31.4" height="10.6" rx="2" fill="#8a8a8a" stroke="#a9a9a9" stroke-width=".8"/><path d="M1037.6 245v8" stroke="#a9a9a9" stroke-width=".6"/><rect x="1056" y="271.8" width="21.4" height="143.4" rx="3" fill="#3e3e3e" stroke="#505050" stroke-width="1"/><circle cx="1066.7" cy="293" r="5.6" fill="none" stroke="#2d2d2d" stroke-width="1.6"/><path d="M1062 284.6h9.4" stroke="#2d2d2d" stroke-width="1.2"/><path d="M1062.6 318.6c0-5 8.2-5 8.2 0v5.4c0 4-8.2 4-8.2 0z" fill="none" stroke="#2d2d2d" stroke-width="1.5"/><path d="M1063.6 311h6.4" stroke="#2d2d2d" stroke-width="1.2"/><path d="M1061.4 335.6l10.6 10.6M1072 335.6l-10.6 10.6" stroke="#2d2d2d" stroke-width="1.5"/><path d="M1064 350.6h5.4" stroke="#2d2d2d" stroke-width="1"/><circle cx="1066.7" cy="368" r="4.6" fill="none" stroke="#2d2d2d" stroke-width="1.5"/><path d="M1066.7 360v16M1060.4 368h12.6" stroke="#2d2d2d" stroke-width="1"/><path d="M1064 380.6h5.4" stroke="#2d2d2d" stroke-width="1"/><rect x="1061" y="392" width="11.4" height="12.4" fill="none" stroke="#2d2d2d" stroke-width="1.4"/><path d="M1064.6 395.6l4.4 2.7-4.4 2.7z" fill="#2d2d2d"/><path d="M1064 408.6h5.4" stroke="#2d2d2d" stroke-width="1"/><circle cx="1074.2" cy="274.8" r="1" fill="#555"/><circle cx="1074.2" cy="412.2" r="1" fill="#555"/></svg>
<span class="t" style="left:1024.8px;top:149.6px;font-size:11.5px;transform:scaleX(1.059);color:#cfcfcf;font-weight:bold;">N</span>
<span class="t" style="left:1025px;top:218.4px;font-size:11.5px;transform:scaleX(1.069);color:#cfcfcf;font-weight:bold;">S</span>
<span class="t" style="left:989.6px;top:184.4px;font-size:11.5px;transform:scaleX(1.087);color:#cfcfcf;font-weight:bold;">W</span>
<span class="t" style="left:1058.6px;top:184.4px;font-size:11.5px;transform:scaleX(1.069);color:#cfcfcf;font-weight:bold;">E</span>
<span class="t" style="left:1023px;top:184.4px;font-size:7px;transform:scaleX(0.932);color:#4c4c4c;">TOP</span>
<span class="t" style="left:1016.6px;top:243.8px;font-size:6.5px;transform:scaleX(0.949);color:#b8b8b8;">WCS</span>
<div class="b" style="left:217.3px;top:540.6px;width:38.7px;height:17px;background:#1f252e;"></div>
<div class="b" style="left:256px;top:540.6px;width:607px;height:17px;background:#b3b3b3;"></div>
<div class="b" style="left:855.6px;top:541.2px;width:7.4px;height:16px;background:#c6c6c6;"></div>
<svg style="left:215px;top:540px" width="650" height="18" viewBox="215 540 650 18" ><path d="M219.6 543v12.6M221.6 543v12.6" stroke="#a4abb4" stroke-width="1.3" stroke-dasharray="1.1 .800"/><path d="M228.2 546.8l5 5M233.2 546.8l-5 5" stroke="#dfe2e6" stroke-width="1.2"/><path d="M242.6 553.6l5.2-5.6" stroke="#dfe2e6" stroke-width="1.7"/><path d="M246.4 548.6a2.6 2.6 0 0 1 3.4-3.2l-1.6 1.7 1.2 1.2 1.7-1.5a2.6 2.6 0 0 1-3.3 3.2z" fill="#dfe2e6"/><rect x="258.9" y="546" width="10.6" height="7" fill="#9d9d9d" stroke="#555" stroke-width="1"/><path d="M258.9 547.2h10.6" stroke="#555" stroke-width="1.4"/><path d="M260.8 549.6l1.6 1.2-1.6 1.2" stroke="#444" stroke-width=".7" fill="none"/><path d="M271.6 548.7h3.6l-1.8 2.2z" fill="#444"/><path d="M857.6 550.2l2.2-2.4 2.2 2.4z" fill="#555"/></svg>
<span class="t" style="left:281px;top:544.1px;font-size:9px;transform:scaleX(0.854);color:#6c6c6c;font-style:italic;font-family:'Liberation Mono',monospace;">Type a command</span>
<svg style="left:0px;top:558px" width="200" height="23" viewBox="0 558 200 23" ><path d="M10.4 566.8h11.6M10.4 570.2h11.6M10.4 573.6h11.6" stroke="#e9ebee" stroke-width="1.5"/><path d="M28.6 577.8l5.4-17.2h39.2l-4.8 17.2z" fill="#3c4651"/><path d="M113.4 577.6l3.8-14" stroke="#39414e" stroke-width="1.2"/><path d="M158.6 577.6l3.8-14" stroke="#39414e" stroke-width="1.2"/><path d="M187.8 577.6l3.8-14" stroke="#39414e" stroke-width="1.2"/><path d="M174 565.6v9M169.5 570.1h9" stroke="#e9ebee" stroke-width="1.7"/></svg>
<span class="t" style="left:39.8px;top:565px;transform:scaleX(0.837);color:#fff;font-weight:bold;">Model</span>
<span class="t" style="left:79.3px;top:565px;transform:scaleX(0.811);color:#eef0f3;">Layout1</span>
<span class="t" style="left:123.7px;top:565px;transform:scaleX(0.826);color:#eef0f3;">Layout2</span>
<div class="b" style="left:712px;top:562.8px;width:368px;height:15.6px;background:#323b46;"></div>
<div class="b" style="left:791.7px;top:562.8px;width:14.8px;height:15.4px;background:#5b93c4;"></div>
<div class="b" style="left:878.7px;top:562.8px;width:15.3px;height:15.4px;background:#5b93c4;"></div>
<div class="b" style="left:907.8px;top:562.8px;width:15.7px;height:15.4px;background:#5b93c4;"></div>
<div class="b" style="left:743.8px;top:562.8px;width:1.2px;height:15.6px;background:#222831;"></div>
<div class="b" style="left:904.4px;top:562.8px;width:1.2px;height:15.6px;background:#222831;"></div>
<div class="b" style="left:979.4px;top:562.8px;width:1.2px;height:15.6px;background:#222831;"></div>
<div class="b" style="left:1043.3000000000002px;top:562.8px;width:1.2px;height:15.6px;background:#222831;"></div>
<span class="t" style="left:714.6px;top:565.5px;font-size:9.2px;transform:scaleX(0.82);color:#f4f5f7;-webkit-text-stroke:.45px #f4f5f7;">MODEL</span>
<span class="t" style="left:959.6px;top:565.4px;font-size:7.5px;transform:scaleX(0.805);color:#eef0f3;">1:1</span>
<svg style="left:740px;top:560px" width="340" height="20" viewBox="740 560 340 20" ><path d="M751 565.4v10.4M754 565.4v10.4M757 565.4v10.4M748.6 567.6h10.4M748.6 570.6h10.4M748.6 573.6h10.4" stroke="#e9ebee" stroke-width=".9"/><path d="M766 567.1h9M766 570.5h9M766 573.9h9" stroke="#e9ebee" stroke-width="1.7" stroke-dasharray="1.7 1.8"/><path d="M781 569.25h5.4l-2.7 3.1z" fill="#e9ebee"/><path d="M794.8 565.4v9.6h9.2" stroke="#fff" stroke-width="1.4" fill="none"/><rect x="794.8" y="571.4" width="3" height="3" fill="none" stroke="#fff" stroke-width=".7"/><circle cx="814.6" cy="570.8" r="4.6" fill="none" stroke="#e9ebee" stroke-width="1.1"/><path d="M814.6 570.8h6.4M814.6 570.8l3.6-3.2" stroke="#e9ebee" stroke-width="1"/><path d="M826 569.25h5.4l-2.7 3.1z" fill="#e9ebee"/><path d="M842 564.6v12" stroke="#62a566" stroke-width="1.5"/><path d="M840.2 568.6l3.6 4.8" stroke="#62a566" stroke-width="1"/><path d="M853.2 569.25h5.4l-2.7 3.1z" fill="#e9ebee"/><path d="M865 575.8h10.4M865 575.8l8.6-9.2" stroke="#e9ebee" stroke-width="1.1" fill="none"/><rect x="882.4" y="566.4" width="8.8" height="8.8" fill="#74acd8" stroke="#fff" stroke-width="1"/><rect x="881.2" y="565.2" width="2.4" height="2.4" fill="#5b93c4" stroke="#fff" stroke-width=".7"/><path d="M897.1 569.25h5.4l-2.7 3.1z" fill="#e9ebee"/><path d="M915.2 565.4v4.6M915.2 569.6l-3.9 6.4M915.2 569.6l3.9 6.4" stroke="#fff" stroke-width="1.8" fill="none" stroke-linecap="round"/><path d="M918.2 564.6l2.6 2.6M920.8 564.6l-2.6 2.6" stroke="#fff" stroke-width=".8"/><path d="M931 565.4v4.6M931 569.6l-3.9 6.4M931 569.6l3.9 6.4" stroke="#e9ebee" stroke-width="1.8" fill="none" stroke-linecap="round"/><path d="M934.6 564.6v3.4M932.9 566.3h3.4" stroke="#e9ebee" stroke-width=".8"/><path d="M948 565.4v4.6M948 569.6l-3.9 6.4M948 569.6l3.9 6.4" stroke="#e9ebee" stroke-width="1.8" fill="none" stroke-linecap="round"/><path d="M970.8 569.25h5.4l-2.7 3.1z" fill="#e9ebee"/><circle cx="988.5" cy="570.6" r="3.1" fill="none" stroke="#e9ebee" stroke-width="2"/><path d="M988.5 565.2v10.8M983.1 570.6h10.8M984.7 566.8l7.6 7.6M992.3 566.8l-7.6 7.6" stroke="#e9ebee" stroke-width="1.3"/><circle cx="988.5" cy="570.6" r="1.3" fill="#2d3542"/><path d="M999.5 569.25h5.4l-2.7 3.1z" fill="#e9ebee"/><path d="M1016.4 565.2v10.8M1011 570.6h10.8" stroke="#e9ebee" stroke-width="1.5"/><rect x="1029.6" y="565" width="3.6" height="3.6" fill="none" stroke="#e9ebee" stroke-width=".9"/><circle cx="1037.6" cy="568.6" r="1.7" fill="none" stroke="#e9ebee" stroke-width=".9"/><path d="M1031.4 576.2l2.4-4 2.4 4z" fill="none" stroke="#e9ebee" stroke-width=".9"/><rect x="1047" y="566" width="11.4" height="9" fill="#5a636f" stroke="#e9ebee" stroke-width="1.2"/><path d="M1049 571.4v1.8h2.4M1056.4 569.6v-1.8h-2.4" stroke="#e9ebee" stroke-width=".9" fill="none"/><path d="M1065 566.6h11.2M1065 570.6h11.2M1065 574.6h11.2" stroke="#e9ebee" stroke-width="1.4"/></svg>
<div class="b" style="left:31.9px;top:580.7px;width:195.1px;height:27.3px;background:#f1f1f1;"></div>
<div class="b" style="left:525.7px;top:580.7px;width:32px;height:27.3px;background:#4b5f68;"></div>
<div class="b" style="left:395.8px;top:606px;width:27.69999999999999px;height:2px;background:#8ec6ea;"></div>
<div class="b" style="left:462.9px;top:606px;width:26.600000000000023px;height:2px;background:#8ec6ea;"></div>
<div class="b" style="left:525.7px;top:606px;width:32px;height:2px;background:#8ec6ea;"></div>
<svg style="left:0px;top:580px" width="1080" height="28" viewBox="0 580 1080 28" ><path d="M10.2 589.6l5-.800v4.5h-5zM16 588.7l6.2-1v5.6h-6.2zM10.2 594.1h5v4.5l-5-.800zM16 594.1h6.2v5.6l-6.2-1z" fill="#f4f6f7"/><circle cx="47.8" cy="591.8" r="3.6" fill="none" stroke="#3c3c3c" stroke-width="1.2"/><path d="M45.2 594.4l-3.6 4" stroke="#3c3c3c" stroke-width="1.3"/><rect x="175.8" y="597.8" width="23" height="4.4" rx="1" fill="#e59a52"/><rect x="178" y="599" width="18" height="1.6" fill="#e07a70"/><rect x="176.4" y="602.2" width="22.4" height="2" fill="#efd044"/><rect x="175.6" y="604.2" width="23.4" height="3.8" fill="#7cc232"/><circle cx="189.3" cy="594.4" r="3.9" fill="#2f9be2"/><circle cx="188.2" cy="593.2" r="1.5" fill="#6cc0f2"/><path d="M191.6 596.2l2.6 1.4" stroke="#1c3f78" stroke-width="1.8"/><circle cx="187.4" cy="588.4" r="1.6" fill="#f6f0f0"/><rect x="200" y="591.2" width="2.9" height="16.799999999999955" fill="#5a72c8"/><rect x="202.9" y="587" width="6.1" height="21" fill="#e272c2"/><rect x="209" y="584" width="6.2" height="24" fill="#a262e2"/><rect x="215.2" y="587.3" width="5.5" height="20.700000000000045" fill="#c87434"/><rect x="220.7" y="585" width="5.9" height="23" fill="#52a252"/><rect x="209" y="584" width="6.2" height="5.2" fill="#e6c244"/><rect x="202.9" y="587" width="1" height="21" fill="#b03c92"/><rect x="208" y="587" width="1" height="21" fill="#b03c92"/><rect x="204.4" y="602.4" width="3" height="2.4" fill="#f6d6ea"/><rect x="210.6" y="602.4" width="3" height="2" fill="#5a2ea8"/><rect x="222" y="602" width="3.4" height="2.4" fill="#a6e08a"/><rect x="216.4" y="603" width="3" height="1.6" fill="#eaa060"/><rect x="239.4" y="590.6" width="5.4" height="6" fill="none" stroke="#f2f4f5" stroke-width="1.3"/><path d="M237.4 588.7h8.6M237.4 598.5h8.6" stroke="#f2f4f5" stroke-width="1.5"/><path d="M237.6 588v3.4M237.6 595.8v3.4M247.4 588.6v2.4M247.4 592.4v2.6M247.4 596.4v2.6" stroke="#f2f4f5" stroke-width="1.3"/><defs><linearGradient id="eg" x1="0" y1="0" x2="0" y2="1"><stop offset="0" stop-color="#3cbbe8"/><stop offset=".5" stop-color="#2388dc"/><stop offset="1" stop-color="#1a5cb8"/></linearGradient></defs><circle cx="277.6" cy="594.1" r="8.7" fill="url(#eg)"/><path d="M279 585.5c4.6.400 7.4 4.2 7.3 8.7c-.100 2.8-2.4 4.6-5.3 4.4c1.6-1 1.8-3.4-.300-4.8c-1.2-.800-2.8-1.1-4.4-.900c.200-3 1.2-5.6 2.7-7.4z" fill="#52d47e"/><path d="M276.2 594.6c0-2.2 2.2-3.2 3.8-2.4c1.8.900 2.2 3.2.700 4.8c1.8.400 4.3-.600 5.4-2.8l.4 1.4c-1 3-3.4 5.2-6.4 6c-2.2-1.2-3.9-4-3.9-7z" fill="#1c3138"/><path d="M303 587h6l1.2 1.4h7.6v11.6h-14.8z" fill="#e9bf3c"/><rect x="303" y="588.6" width="14.8" height="11.4" fill="#f2d458"/><rect x="303" y="590.2" width="14.8" height="3" fill="#f7e48c"/><rect x="306.2" y="595" width="7.8" height="5" fill="#5b93a6"/><rect x="308" y="596.8" width="4.2" height="3.2" fill="#a9d3cf"/><path d="M339.4 590v-1.6c0-4 8-4 8 0v1.6" stroke="#f3f4f5" stroke-width="1.3" fill="none"/><rect x="335.2" y="589.8" width="16.4" height="13" rx=".8" fill="#f5f6f7"/><rect x="340" y="592.8" width="3" height="3" fill="#e8503a"/><rect x="344" y="592.8" width="3" height="3" fill="#6cbf4a"/><rect x="340" y="596.8" width="3" height="3" fill="#3a9be0"/><rect x="344" y="596.8" width="3" height="3" fill="#f2c33a"/><path d="M368.2 590.8l8.5-4.8 8.5 4.8v10.8h-17z" fill="#1f78c8"/><path d="M368.2 591.6l8.5 5.4 8.5-5.4v10h-17z" fill="#35a7ea"/><path d="M368.2 601.6l8.5-5.8 8.5 5.8z" fill="#5cc1f4"/><circle cx="410.7" cy="594" r="7.8" fill="#f5862a"/><circle cx="411.4" cy="594.6" r="4.2" fill="#7a3fd0"/><path d="M403.4 591.6c1.6-5 7-7.2 10.6-5.4c-2.8 0-4.2 1.6-4.2 3.2c2.4-.600 4.4.800 4.6 3c-2-1.6-5.4-1-6 1.6c-.400 2.4 1.6 4.4 4.4 4.2c-3 2-7.4.800-8.8-2.6c-.600-1.4-.800-2.6-.600-4z" fill="#fbb03a"/><path d="M404 586.8c.800 1 1.4 2.4 1 3.8l-1.8 1.4c-.200-2 0-3.8.800-5.2z" fill="#f5662a"/><path d="M437.4 587h7.4l3.2 3.2v10.8h-10.6z" fill="#f4f5f6"/><path d="M444.8 587v3.2h3.2z" fill="#c4c9cf"/><circle cx="475.6" cy="593.4" r="7.2" fill="#23272c" stroke="#dfe2e5" stroke-width="1.2"/><path d="M472 590.4a2.6 2.6 0 1 1 3 3.6M478.4 589.6a2.6 2.6 0 0 1-1 4.8" stroke="#c9cdd1" stroke-width=".9" fill="none"/><circle cx="481" cy="597.8" r="3.1" fill="#e8202a"/><circle cx="508.6" cy="593.4" r="7.2" fill="#15191d" stroke="#f1f2f3" stroke-width="1.5"/><circle cx="508.6" cy="593.4" r="4.3" fill="#d9202a"/><path d="M534.8 586h12.6l2.8 2.6v13.4h-15.4z" fill="#c9184b"/><path d="M534.8 586h2.4v16h-2.4z" fill="#8e1236"/><rect x="827.8" y="588.6" width="15.4" height="10.6" rx="1.4" fill="none" stroke="#f1f2f3" stroke-width="1.3"/><rect x="830.4" y="592.4" width="4.4" height="4" fill="none" stroke="#f1f2f3" stroke-width="1"/><path d="M830 590.8h11M836.6 593h4.4M836.6 595.8h4.4" stroke="#f1f2f3" stroke-width=".9"/><path d="M912.2 596.4l3.7-3.8 3.7 3.8" stroke="#f1f2f3" stroke-width="1.2" fill="none"/><rect x="929.8" y="588.4" width="4" height="7.4" rx="2" fill="#f1f2f3"/><path d="M928.2 593.8c0 5 7.2 5 7.2 0M931.8 597.6v1.8" stroke="#f1f2f3" stroke-width="1" fill="none"/><rect x="944.8" y="590.4" width="8.8" height="6" fill="none" stroke="#f1f2f3" stroke-width="1.1"/><path d="M946.6 599h5.4M949.2 596.4v2.6M942.6 589.6v7.4" stroke="#f1f2f3" stroke-width="1"/><path d="M959.6 592.6h1.8l2.6-2.4v8l-2.6-2.4h-1.8z" fill="#f1f2f3"/><path d="M965.6 592.2c1 1.2 1 3 0 4.2M967.4 590.6c2 2.2 2 5.2 0 7.4M969.2 589.4c2.6 3 2.6 6.8 0 9.8" stroke="#f1f2f3" stroke-width=".8" fill="none"/><path d="M1052 589.4h11.2v7.6h-7.6l-3.6 2.4z" fill="#f4f5f6"/><path d="M1054 591.8h7.2M1054 594h7.2" stroke="#8a93a0" stroke-width=".7"/><circle cx="1062.4" cy="599" r="4.3" fill="#1d2233" stroke="#c9cdd3" stroke-width=".8"/><path d="M1077.6 581v27" stroke="#6f7a8c" stroke-width=".8"/></svg>
<span class="t" style="left:539.4px;top:587.2px;font-size:9.5px;color:#fff;font-weight:bold;">A</span>
<span class="t" style="left:540.4px;top:594.2px;font-size:3.2px;color:#fff;font-weight:bold;">CAD</span>
<span class="t" style="left:59.6px;top:589.6px;font-size:10.5px;transform:scaleX(0.924);color:#444;">Type here to search</span>
<span class="t" style="left:849.6px;top:589.1px;font-size:9.5px;transform:scaleX(0.89);color:#f7f8f9;-webkit-text-stroke:.4px #f7f8f9;">33°C</span>
<span class="t" style="left:875px;top:589.1px;font-size:9.5px;transform:scaleX(0.919);color:#f7f8f9;-webkit-text-stroke:.4px #f7f8f9;">Haze</span>
<span class="t" style="left:977.2px;top:589.1px;font-size:8.8px;transform:scaleX(0.776);color:#f7f8f9;-webkit-text-stroke:.3px #f7f8f9;">ENG</span>
<span class="t" style="left:1011.1px;top:583.2px;font-size:8.8px;transform:scaleX(0.813);color:#f7f8f9;-webkit-text-stroke:.3px #f7f8f9;">08:17</span>
<span class="t" style="left:1001.3px;top:594.6px;font-size:8.8px;transform:scaleX(0.851);color:#f7f8f9;-webkit-text-stroke:.3px #f7f8f9;">09-08-2024</span>
<span class="t" style="left:1060.8px;top:594px;font-size:6px;color:#f4f5f6;">3</span>
</div>
</body>
</html>
